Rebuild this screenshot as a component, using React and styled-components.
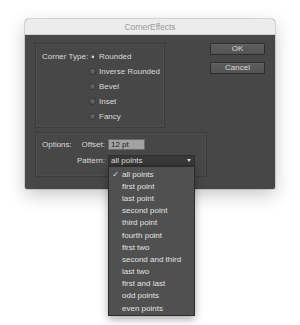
import styled, { createGlobalStyle } from 'styled-components';

const GlobalStyle = createGlobalStyle`
  html, body {
    margin: 0;
    padding: 0;
    background: #ffffff;
  }
  body {
    font-family: 'Liberation Sans', Arial, sans-serif;
  }
`;

const cornerTypes = ['Rounded', 'Inverse Rounded', 'Bevel', 'Inset', 'Fancy'];

const patterns = [
  'all points',
  'first point',
  'last point',
  'second point',
  'third point',
  'fourth point',
  'first two',
  'second and third',
  'last two',
  'first and last',
  'odd points',
  'even points',
];

function App() {
  return (
    <Page>
      <GlobalStyle />
      <Dialog>
        <TitleBar>CornerEffects</TitleBar>
        <Body>
          <LeftColumn>
            <CornerGroup>
              <GroupLabel>Corner Type:</GroupLabel>
              <RadioList>
                {cornerTypes.map((type, i) => (
                  <RadioRow key={type}>
                    <Radio $checked={i === 0} />
                    <span>{type}</span>
                  </RadioRow>
                ))}
              </RadioList>
            </CornerGroup>
            <OptionsGroup>
              <span>Options:</span>
              <FieldLabel>Offset:</FieldLabel>
              <OffsetInput>12 pt</OffsetInput>
              <FieldLabel $wide>Pattern:</FieldLabel>
              <SelectWrap>
                <Select>
                  <span>all points</span>
                  <Arrow />
                </Select>
                <Menu>
                  {patterns.map((p, i) => (
                    <MenuItem key={p}>
                      <Check>{i === 0 ? '✓' : ''}</Check>
                      {p}
                    </MenuItem>
                  ))}
                </Menu>
              </SelectWrap>
            </OptionsGroup>
          </LeftColumn>
          <Buttons>
            <Button>OK</Button>
            <Button>Cancel</Button>
          </Buttons>
        </Body>
      </Dialog>
    </Page>
  );
}

export default App;

const Page = styled.div`
  width: 300px;
  height: 325px;
  padding: 19px 0 0 25px;
  box-sizing: border-box;
  overflow: hidden;
`;

const Dialog = styled.div`
  width: 250px;
  border-radius: 4px 4px 2px 2px;
  background: #474747;
  box-shadow: 0 6px 18px rgba(0, 0, 0, 0.22), 0 0 0 1px rgba(0, 0, 0, 0.12);
`;

const TitleBar = styled.div`
  height: 15px;
  line-height: 16px;
  text-align: center;
  font-size: 8.4px;
  color: #9a9a9a;
  background: #ececec;
  border-radius: 4px 4px 0 0;
  border-bottom: 1px solid #d0d0d0;
`;

const Body = styled.div`
  display: flex;
  padding: 8px 10px 12px 10px;
  gap: 3px;
`;

const LeftColumn = styled.div`
  display: flex;
  flex-direction: column;
  gap: 4px;
  width: 172px;
`;

const Group = styled.div`
  border: 1px solid #3c3c3c;
  box-shadow: inset 0 0 0 1px #4d4d4d;
  box-sizing: border-box;
  color: #dadada;
  font-size: 8px;
`;

const CornerGroup = styled(Group)`
  width: 130px;
  height: 85px;
  display: flex;
  padding: 5px 0 0 6px;
`;

const GroupLabel = styled.div`
  width: 47px;
  line-height: 15px;
`;

const RadioList = styled.div`
  display: flex;
  flex-direction: column;
`;

const RadioRow = styled.div`
  display: flex;
  align-items: center;
  gap: 3px;
  height: 15px;
`;

const Radio = styled.span`
  position: relative;
  width: 7px;
  height: 7px;
  border-radius: 50%;
  box-sizing: border-box;
  border: 1px solid #353535;
  background: linear-gradient(#666666, #5a5a5a);

  &::after {
    content: '';
    position: absolute;
    left: 1.5px;
    top: 1.5px;
    width: 2px;
    height: 2px;
    border-radius: 50%;
    background: #f4f4f4;
    display: ${(p) => (p.$checked ? 'block' : 'none')};
  }
`;

const OptionsGroup = styled(Group)`
  width: 172px;
  height: 45px;
  padding: 6px 0 0 6px;
  display: grid;
  grid-template-columns: 39px 27px 87px;
  grid-template-rows: 11px 11px;
  row-gap: 5px;
  align-items: center;
`;

const FieldLabel = styled.span`
  text-align: right;
  padding-right: 3px;
  grid-column: ${(p) => (p.$wide ? '1 / 3' : 'auto')};
`;

const OffsetInput = styled.div`
  width: 37px;
  height: 11px;
  box-sizing: border-box;
  background: #a2a2a2;
  border: 1px solid #6a6a6a;
  color: #1d1d1d;
  font-size: 8px;
  line-height: 9px;
  padding-left: 2px;
`;

const SelectWrap = styled.div`
  position: relative;
  width: 87px;
`;

const Select = styled.div`
  height: 11px;
  box-sizing: border-box;
  background: #383838;
  border: 1px solid #2f2f2f;
  display: flex;
  align-items: center;
  justify-content: space-between;
  padding: 0 3px 0 2px;
  line-height: 9px;
  color: #dcdcdc;
`;

const Arrow = styled.span`
  width: 0;
  height: 0;
  border-left: 2.5px solid transparent;
  border-right: 2.5px solid transparent;
  border-top: 3px solid #d8d8d8;
`;

const Menu = styled.div`
  position: absolute;
  top: 11px;
  left: 0;
  width: 87px;
  box-sizing: border-box;
  background: #505050;
  border: 1px solid #2c2c2c;
  padding: 1px 0;
  box-shadow: 0 3px 8px rgba(0, 0, 0, 0.35);
  z-index: 2;
`;

const MenuItem = styled.div`
  display: flex;
  align-items: center;
  height: 12.2px;
  font-size: 8px;
  color: #e2e2e2;
`;

const Check = styled.span`
  width: 13px;
  text-align: center;
  font-size: 8px;
  font-family: 'DejaVu Sans', sans-serif;
`;

const Buttons = styled.div`
  display: flex;
  flex-direction: column;
  gap: 7px;
`;

const Button = styled.div`
  width: 55px;
  height: 12px;
  box-sizing: border-box;
  border: 1px solid #2d2d2d;
  border-radius: 1px;
  background: linear-gradient(#5c5c5c, #545454);
  box-shadow: inset 0 1px 0 #666;
  color: #dadada;
  font-size: 8px;
  line-height: 10px;
  text-align: center;
`;
